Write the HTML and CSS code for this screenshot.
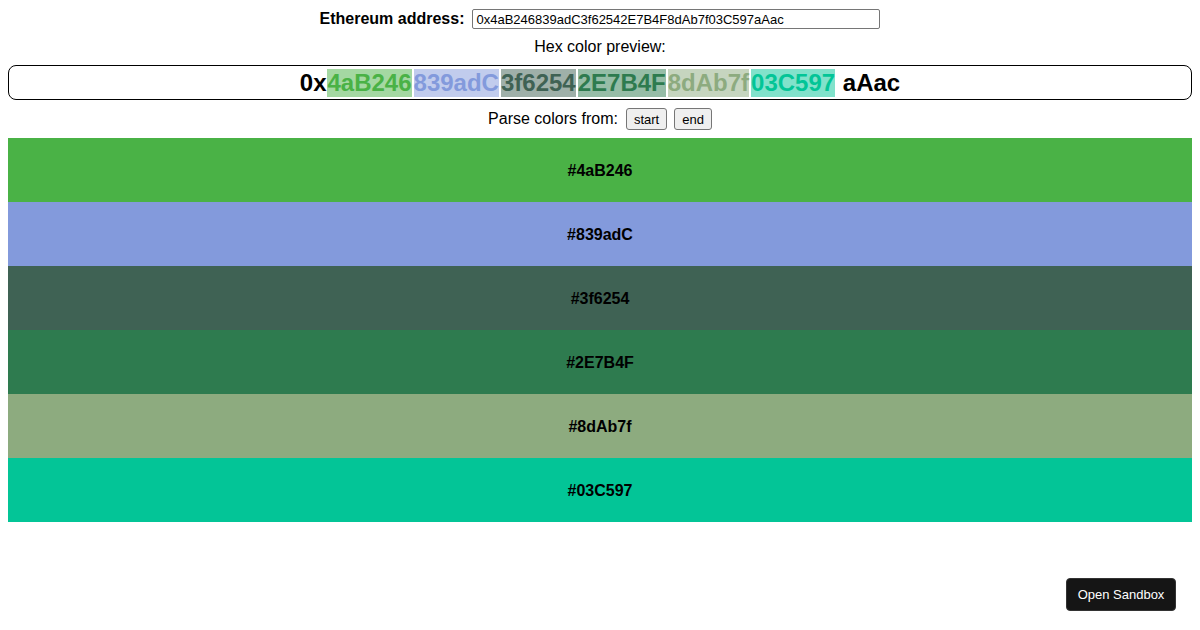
FILE: index.html
```html
<!DOCTYPE html>
<html lang="en">

<head>
    <meta charset="UTF-8">
    <meta name="viewport" content="width=device-width, initial-scale=1.0">
    <title>Ethereum address colors</title>
    <link rel="stylesheet" href="styles.css">
</head>

<body>

    <div class="address-row">
        <label for="address">Ethereum address:</label>
        <input id="address" type="text" value="0x4aB246839adC3f62542E7B4F8dAb7f03C597aAac">
    </div>

    <div class="preview-label">Hex color preview:</div>

    <div class="preview">0x<span class="chunk c1">4aB246</span><span class="chunk c2">839adC</span><span class="chunk c3">3f6254</span><span class="chunk c4">2E7B4F</span><span class="chunk c5">8dAb7f</span><span class="chunk c6">03C597</span> aAac</div>

    <div class="parse-row">
        <span class="parse-label">Parse colors from:</span>
        <button>start</button>
        <button>end</button>
    </div>

    <div class="swatches">
        <div class="swatch s1">#4aB246</div>
        <div class="swatch s2">#839adC</div>
        <div class="swatch s3">#3f6254</div>
        <div class="swatch s4">#2E7B4F</div>
        <div class="swatch s5">#8dAb7f</div>
        <div class="swatch s6">#03C597</div>
    </div>

    <button class="sandbox-button">Open Sandbox</button>

</body>

</html>
```

FILE: styles.css
```css
body {
    margin: 8px;
    font-family: "Liberation Sans", Arial, sans-serif;
    font-size: 16px;
    color: #000;
    background: #fff;
    text-align: center;
}

.address-row {
    display: flex;
    justify-content: center;
    align-items: center;
    gap: 8px;
    height: 22px;
}

.address-row label {
    font-weight: bold;
}

.address-row input {
    width: 400px;
    height: 16px;
    padding: 1px 3px;
    border: 1px solid #767676;
    border-radius: 2px;
    font-family: "Liberation Sans", Arial, sans-serif;
    font-size: 13px;
}

.preview-label {
    margin-top: 8px;
    line-height: 18px;
}

.preview {
    margin-top: 9px;
    height: 33px;
    line-height: 33px;
    border: 1px solid #000;
    border-radius: 8px;
    font-size: 24px;
    font-weight: bold;
}

.chunk {
    display: inline-block;
    line-height: 28px;
    margin: 0 1px;
}

.c1 { color: #4aB246; background: #4aB24680; }
.c2 { color: #839adC; background: #839adC80; }
.c3 { color: #3f6254; background: #3f625480; }
.c4 { color: #2E7B4F; background: #2E7B4F80; }
.c5 { color: #8dAb7f; background: #8dAb7f80; }
.c6 { color: #03C597; background: #03C59780; }

.parse-row {
    display: flex;
    justify-content: center;
    align-items: center;
    gap: 7px;
    height: 22px;
    margin-top: 8px;
}

.parse-label {
    margin-right: 1px;
}

.parse-row button {
    font-family: "Liberation Sans", Arial, sans-serif;
    font-size: 13px;
    padding: 1px 7px;
    height: 22px;
    background: #efefef;
    border: 1px solid #767676;
    border-radius: 3px;
}

.swatches {
    margin-top: 8px;
}

.swatch {
    height: 63px;
    padding-top: 1px;
    display: flex;
    justify-content: center;
    align-items: center;
    font-weight: bold;
}

.s1 { background: #4aB246; }
.s2 { background: #839adC; }
.s3 { background: #3f6254; }
.s4 { background: #2E7B4F; }
.s5 { background: #8dAb7f; }
.s6 { background: #03C597; }

.sandbox-button {
    position: fixed;
    right: 24px;
    bottom: 19px;
    width: 110px;
    height: 33px;
    background: #151515;
    color: #fff;
    border: 1px solid #333;
    border-radius: 4px;
    font-family: "Liberation Sans", Arial, sans-serif;
    font-size: 13px;
}
```
